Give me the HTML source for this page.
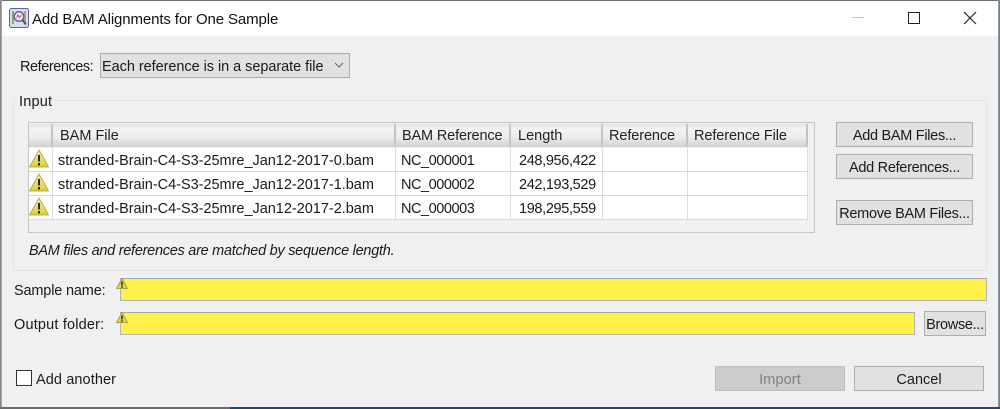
<!DOCTYPE html>
<html><head><meta charset="utf-8"><style>
html,body{margin:0;padding:0;background:#f0f0f0}
#w{position:relative;width:1000px;height:409px;overflow:hidden;background:#f0f0f0;font-family:"Liberation Sans",sans-serif;font-size:14.5px;color:#1a1a1a}
#w div{position:absolute;box-sizing:border-box}
.t{white-space:nowrap;line-height:18px;height:18px}
.b{background:#e1e1e1;border:1px solid #adadad;text-align:center;white-space:nowrap;line-height:27px;letter-spacing:-.3px}
.h{top:124px;height:23px;border-right:2px solid #c4c4c4;background:linear-gradient(#e4e4e4,#f4f4f4 25%,#ececec 60%,#cfcfcf);line-height:24px;padding-left:7px;white-space:nowrap;color:#222}
.l{background:#dcdcdc}
.y{background:#fff04a;border:1px solid #b4b4b4;border-top-color:#a8a8a8}
</style></head><body><div id="w">
<div style="left:0;top:0;width:1000px;height:36px;background:#fff"></div>
<div style="left:0;top:0;width:1000px;height:1px;background:#6f6f6f"></div>
<div style="left:0;top:0;width:2px;height:409px;background:linear-gradient(90deg,#7a7a7a,#b5b5b5)"></div>
<div style="left:998px;top:0;width:2px;height:409px;background:linear-gradient(90deg,#a9a9a9,#5f6f80)"></div>
<div style="left:0;top:407px;width:1000px;height:2px;background:#6c6c6c"></div>
<div style="left:230px;top:407px;width:770px;height:2px;background:#1f4a72"></div>

<svg style="position:absolute;left:9px;top:8px" width="20" height="20" viewBox="0 0 20 20">
<rect x=".5" y=".5" width="19" height="19" rx="2" fill="#d9dcf2" stroke="#5a62a8"/>
<rect x="3" y="3" width="2" height="13" fill="#7fb05a"/><rect x="15" y="3" width="2" height="11" fill="#d8a040"/>
<circle cx="10" cy="8.5" r="4.8" fill="#f0e6f4" stroke="#5e5e96" stroke-width="1.4"/>
<path d="M7.5 9.5 9 7l1.5 2.500L12.500 7" stroke="#b040a0" fill="none"/>
<path d="M13.500 12l3.500 4.500" stroke="#4a4a88" stroke-width="2"/></svg>
<div class="t" style="left:32px;top:11px;font-size:15px;letter-spacing:-.12px;color:#111">Add BAM Alignments for One Sample</div>
<div style="left:852px;top:17px;width:12px;height:1px;background:#c4c4c4"></div>
<div style="left:908px;top:12px;width:12px;height:12px;border:1.500px solid #222"></div>
<svg style="position:absolute;left:963px;top:11px" width="14" height="14"><path d="M1 1 13 13M13 1 1 13" stroke="#222" stroke-width="1.200"/></svg>

<div class="t" style="left:20px;top:58px;letter-spacing:-.45px">References:</div>
<div style="left:100px;top:53px;width:250px;height:25px;background:#e1e1e1;border:1px solid #adadad"></div>
<div class="t" style="left:102px;top:58px;letter-spacing:-.05px">Each reference is in a separate file</div>
<svg style="position:absolute;left:334px;top:62px" width="10" height="7"><path d="M1 1 5 5 9 1" fill="none" stroke="#666"/></svg>

<div style="left:13px;top:100px;width:974px;height:171px;border:1px solid #e3e3e3"></div>
<div class="t" style="left:17px;top:93px;padding:0 2px;background:#f0f0f0;letter-spacing:.2px">Input</div>

<div style="left:28px;top:122px;width:787px;height:111px;border:1px solid #c6c6c6;background:#f0f0f0"></div>
<div style="left:29px;top:148px;width:779px;height:72px;background:#fff"></div>
<div class="h" style="left:29px;width:24px"></div>
<div class="h" style="left:53px;width:343px">BAM File</div>
<div class="h" style="left:396px;width:115px;padding-left:6px;letter-spacing:-.15px">BAM Reference</div>
<div class="h" style="left:511px;width:92px">Length</div>
<div class="h" style="left:603px;width:85px;padding-left:6px;letter-spacing:-.1px">Reference</div>
<div class="h" style="left:688px;width:120px;padding-left:6px;letter-spacing:-.1px">Reference File</div>
<div class="l" style="left:29px;top:171px;width:779px;height:1px"></div>
<div class="l" style="left:29px;top:195px;width:779px;height:1px"></div>
<div class="l" style="left:29px;top:219px;width:779px;height:1px"></div>
<div class="l" style="left:52px;top:148px;width:1px;height:72px"></div>
<div class="l" style="left:395px;top:148px;width:1px;height:72px"></div>
<div class="l" style="left:510px;top:148px;width:1px;height:72px"></div>
<div class="l" style="left:602px;top:148px;width:1px;height:72px"></div>
<div class="l" style="left:687px;top:148px;width:1px;height:72px"></div>
<div class="l" style="left:807px;top:148px;width:1px;height:72px"></div>

<svg width="0" height="0" style="position:absolute"><defs><linearGradient id="g" x1="0" y1="0" x2="0" y2="1"><stop offset="0" stop-color="#f4f0a0"/><stop offset="1" stop-color="#dcd22a"/></linearGradient></defs></svg>
<svg style="position:absolute;left:29px;top:149px" width="20" height="19" viewBox="0 0 20 19"><path d="M10 1 19.500 18H.5Z" fill="url(#g)" stroke="#b4ae50"/><path d="M10 6v6.500M10 14v2.500" stroke="#222" stroke-width="2"/></svg>
<svg style="position:absolute;left:29px;top:173px" width="20" height="19" viewBox="0 0 20 19"><path d="M10 1 19.500 18H.5Z" fill="url(#g)" stroke="#b4ae50"/><path d="M10 6v6.500M10 14v2.500" stroke="#222" stroke-width="2"/></svg>
<svg style="position:absolute;left:29px;top:197px" width="20" height="19" viewBox="0 0 20 19"><path d="M10 1 19.500 18H.5Z" fill="url(#g)" stroke="#b4ae50"/><path d="M10 6v6.500M10 14v2.500" stroke="#222" stroke-width="2"/></svg>

<div class="t" style="left:58px;top:152px;letter-spacing:-.02px">stranded-Brain-C4-S3-25mre_Jan12-2017-0.bam</div>
<div class="t" style="left:58px;top:176px;letter-spacing:-.02px">stranded-Brain-C4-S3-25mre_Jan12-2017-1.bam</div>
<div class="t" style="left:58px;top:200px;letter-spacing:-.02px">stranded-Brain-C4-S3-25mre_Jan12-2017-2.bam</div>
<div class="t" style="left:401px;top:152px;letter-spacing:-.45px">NC_000001</div>
<div class="t" style="left:401px;top:176px;letter-spacing:-.45px">NC_000002</div>
<div class="t" style="left:401px;top:200px;letter-spacing:-.45px">NC_000003</div>
<div class="t" style="left:519px;top:152px;letter-spacing:-.35px">248,956,422</div>
<div class="t" style="left:519px;top:176px;letter-spacing:-.35px">242,193,529</div>
<div class="t" style="left:519px;top:200px;letter-spacing:-.35px">198,295,559</div>

<div class="b" style="left:836px;top:122px;width:137px;height:25px">Add BAM Files...</div>
<div class="b" style="left:836px;top:154px;width:137px;height:25px">Add References...</div>
<div class="b" style="left:836px;top:200px;width:137px;height:25px">Remove BAM Files...</div>

<div class="t" style="left:29px;top:242px;font-style:italic;letter-spacing:-.27px">BAM files and references are matched by sequence length.</div>

<div class="t" style="left:14px;top:282px;letter-spacing:-.17px">Sample name:</div>
<div class="y" style="left:120px;top:278px;width:867px;height:23px"></div>
<div class="t" style="left:14px;top:316px;letter-spacing:.18px">Output folder:</div>
<div class="y" style="left:120px;top:312px;width:795px;height:23px"></div>
<svg style="position:absolute;left:116px;top:278px" width="12" height="11" viewBox="0 0 12 11"><path d="M6 .5 11.500 10.500H.5Z" fill="#e0d640" stroke="#a8a250"/><path d="M6 3.500v4M6 8.200v1.500" stroke="#222" stroke-width="1.500"/></svg>
<svg style="position:absolute;left:116px;top:312px" width="12" height="11" viewBox="0 0 12 11"><path d="M6 .5 11.500 10.500H.5Z" fill="#e0d640" stroke="#a8a250"/><path d="M6 3.500v4M6 8.200v1.500" stroke="#222" stroke-width="1.500"/></svg>
<div class="b" style="left:924px;top:311px;width:62px;height:25px">Browse...</div>

<div style="left:16px;top:370px;width:16px;height:16px;background:#fff;border:1px solid #333"></div>
<div class="t" style="left:36px;top:371px;letter-spacing:.1px">Add another</div>
<div class="b" style="left:715px;top:366px;width:130px;height:25px;background:#ccc;border-color:#bfbfbf;color:#808080;letter-spacing:.1px">Import</div>
<div class="b" style="left:854px;top:366px;width:130px;height:25px;letter-spacing:0">Cancel</div>
</div></body></html>
